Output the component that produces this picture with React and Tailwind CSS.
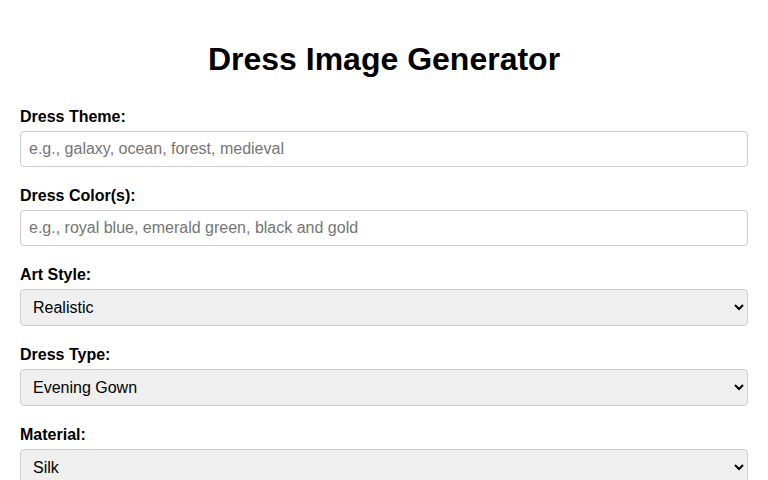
const Field = ({ label, children }) => (
  <div className="mb-5">
    <label className="block mb-[5px] font-bold text-black">{label}</label>
    {children}
  </div>
)

const inputCls =
  'block w-full box-border px-2 py-2 border border-[#cccccc] rounded-[4px] bg-white text-black text-base leading-[normal] placeholder:text-[#757575] outline-none'

const selectCls =
  'block w-full box-border px-2 py-2 border border-[#cccccc] rounded-[4px] bg-[#efefef] text-black text-base leading-[normal] h-[37px]'

export default function App() {
  return (
    <div className="p-5 bg-white text-black font-['Liberation_Sans',Arial,sans-serif] text-base leading-[normal] min-h-screen">
      <h1 className="mt-[21px] mb-[30px] text-[32px] font-bold text-center leading-[normal]">Dress Image Generator</h1>
      <Field label="Dress Theme:">
        <input type="text" className={inputCls} placeholder="e.g., galaxy, ocean, forest, medieval" />
      </Field>
      <Field label="Dress Color(s):">
        <input type="text" className={inputCls} placeholder="e.g., royal blue, emerald green, black and gold" />
      </Field>
      <Field label="Art Style:">
        <select className={selectCls} defaultValue="Realistic">
          <option>Realistic</option>
          <option>Anime</option>
          <option>Watercolor</option>
        </select>
      </Field>
      <Field label="Dress Type:">
        <select className={selectCls} defaultValue="Evening Gown">
          <option>Evening Gown</option>
          <option>Ball Gown</option>
          <option>Cocktail Dress</option>
        </select>
      </Field>
      <Field label="Material:">
        <select className={selectCls} defaultValue="Silk">
          <option>Silk</option>
          <option>Satin</option>
          <option>Velvet</option>
        </select>
      </Field>
    </div>
  )
}
